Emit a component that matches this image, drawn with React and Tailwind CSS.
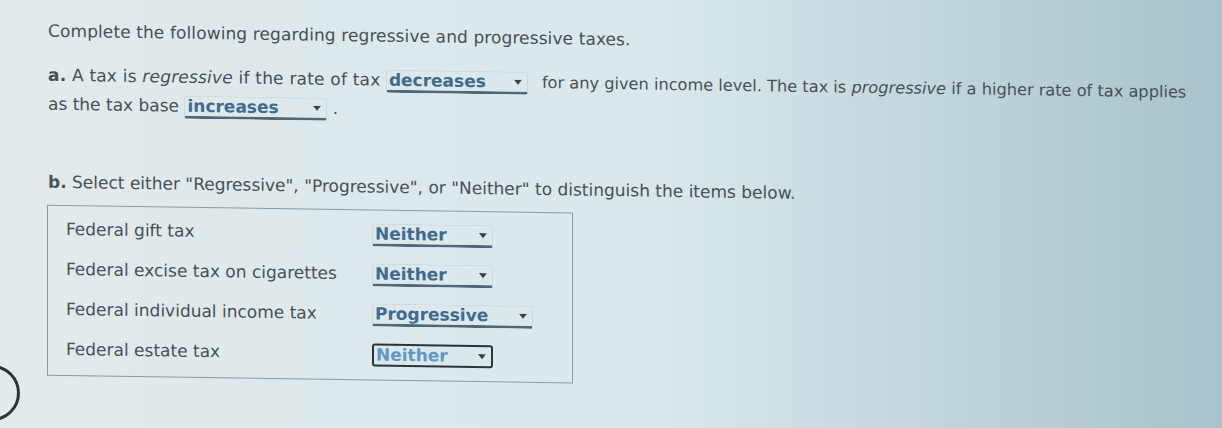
import React from 'react';

function Dropdown({ value, width, focused }) {
  return (
    <span
      className={`inline-flex items-center justify-between h-[23px] px-[2px] rounded-[3px] align-middle ${
        focused ? 'border-2 border-[#2c3538]' : 'border border-[#cddadd] border-b-[3px] border-b-[#4d6878]'
      } ${width}`}
    >
      <span className={`font-bold text-[17px] leading-none ${focused ? 'text-[#5f98c6]' : 'text-[#3f6b8c]'}`}>{value}</span>
      <svg width="8" height="6" viewBox="0 0 8 6" className="mr-[3px] mt-[2px]">
        <path d="M0 0 H8 L4 5 Z" fill="#34434a" />
      </svg>
    </span>
  );
}

const rows = [
  { label: 'Federal gift tax', value: 'Neither', width: 'w-[121px]' },
  { label: 'Federal excise tax on cigarettes', value: 'Neither', width: 'w-[121px]' },
  { label: 'Federal individual income tax', value: 'Progressive', width: 'w-[161px]' },
  { label: 'Federal estate tax', value: 'Neither', width: 'w-[121px]', focused: true },
];

export default function App() {
  return (
    <div className="relative w-[1222px] h-[428px] overflow-hidden bg-linear-to-r from-[#e2eaec] via-[#d9e7ec] via-55% to-[#a8c3ca] font-['DejaVu_Sans',Verdana,sans-serif] text-[#475157] text-[17px]">
      {/* photo is slightly tilted, so skew the whole sheet */}
      <div className="w-[1222px] pl-[48px] pt-[18px] origin-top-left skew-y-[0.85deg]">
        <p className="leading-[24px] tracking-[0.1px]">Complete the following regarding regressive and progressive taxes.</p>

        <div className="mt-[18px] leading-[29px] whitespace-nowrap">
          <span className="tracking-[0.2px]">
            <span className="font-bold">a.</span> A tax is <i>regressive</i> if the rate of tax
          </span>{' '}
          <Dropdown value="decreases" width="w-[142px]" />
          <span className="ml-[14px] text-[16.2px]">
            for any given income level. The tax is <i>progressive</i> if a higher rate of tax applies
          </span>
          <br />
          as the tax base <Dropdown value="increases" width="w-[143px]" /> .
        </div>

        <p className="mt-[51px] leading-[24px]">
          <span className="font-bold">b.</span> Select either "Regressive", "Progressive", or "Neither" to distinguish the items below.
        </p>

        <div className="mt-[11px] -ml-px w-[526px] h-[171px] border border-[#8d9ba1] pl-[18px] pt-[4px]">
          {rows.map((r) => (
            <div key={r.label} className="flex items-center h-[40px]">
              <span className="w-[306px]">{r.label}</span>
              <Dropdown value={r.value} width={r.width} focused={r.focused} />
            </div>
          ))}
        </div>
      </div>

      <div className="absolute left-[-36px] top-[365px] w-[56px] h-[56px] rounded-full border-[3px] border-[#2e3436]" />
    </div>
  );
}
